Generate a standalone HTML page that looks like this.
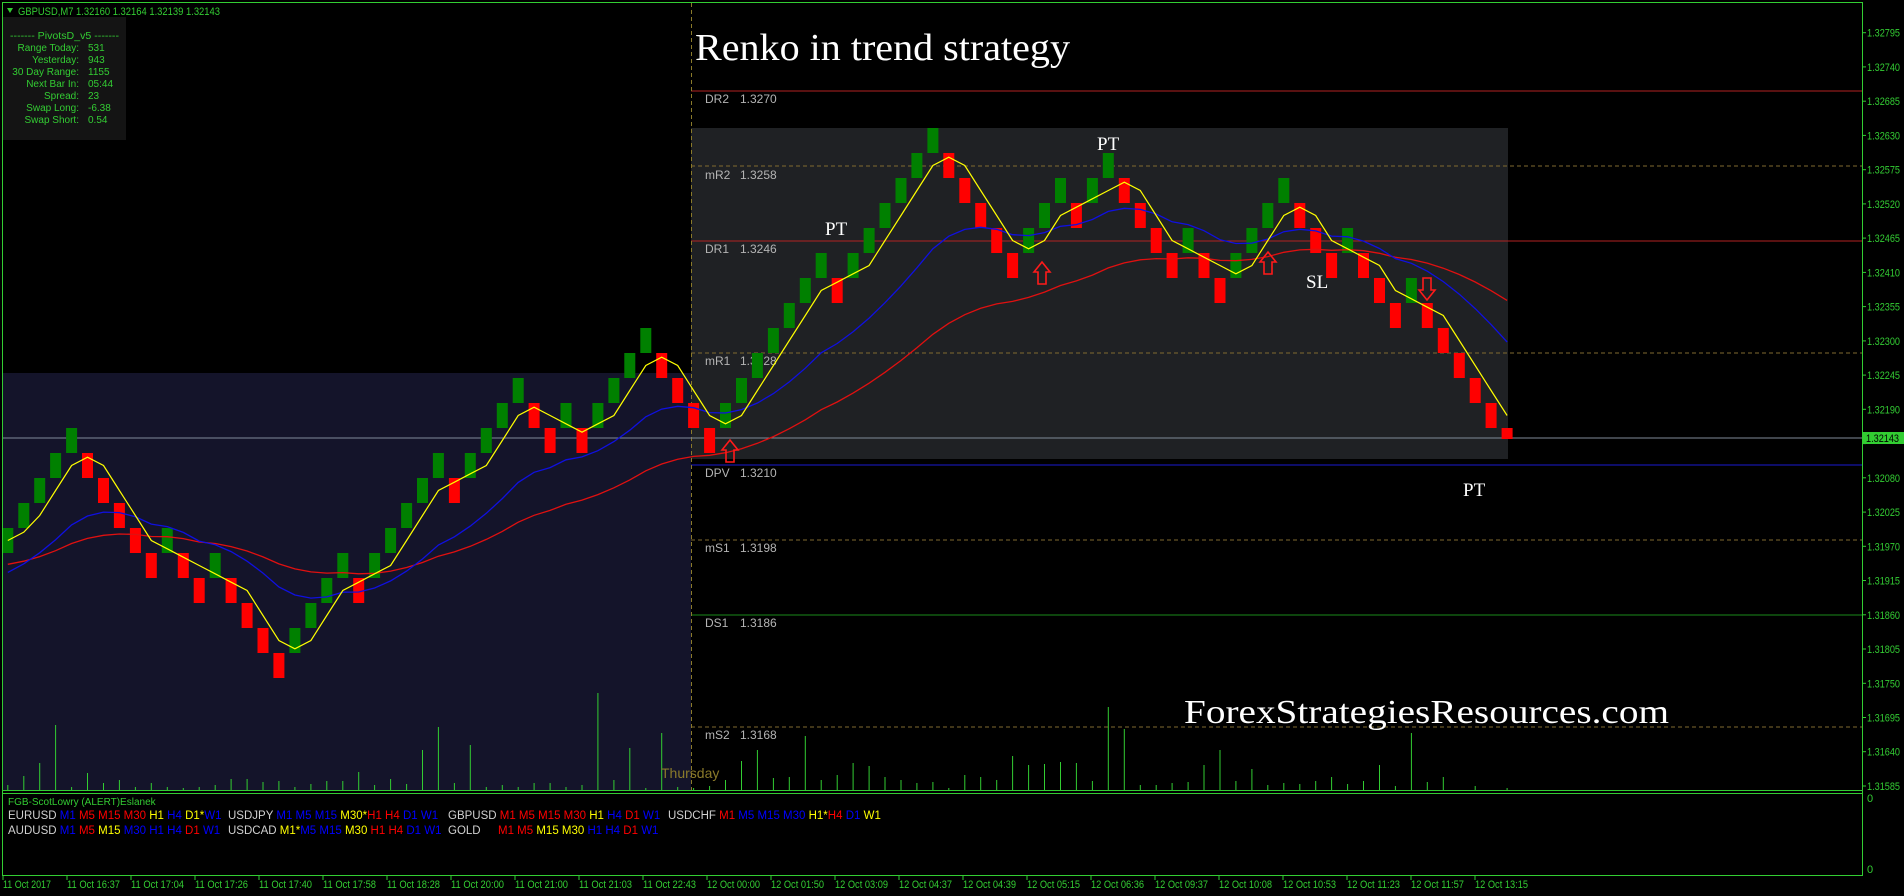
<!DOCTYPE html>
<html><head><meta charset="utf-8"><style>
html,body{margin:0;padding:0;background:#000;overflow:hidden}
svg{display:block}
text{font-family:"Liberation Sans",sans-serif}
.s{font-family:"Liberation Serif",serif;fill:#fff}
.g{fill:#3c3}
.w{fill:#d0d0d0}.b{fill:#0000ff}.r{fill:#ff0000}.y{fill:#ffff00}
</style></head><body>
<svg id="c" width="1904" height="896" viewBox="0 0 1904 896" xmlns="http://www.w3.org/2000/svg">
<rect width="1904" height="896" fill="#000"/>
<rect x="3" y="373" width="688" height="417" fill="#14142a"/>
<rect x="691" y="128" width="817" height="331" fill="#1f2124"/>
<g id="vol"></g>
<line x1="691" y1="91" x2="1862" y2="91" stroke="#b22222"/>
<line x1="691" y1="166" x2="1862" y2="166" stroke="#806a30" stroke-dasharray="4,3"/>
<line x1="691" y1="241" x2="1862" y2="241" stroke="#b22222"/>
<line x1="691" y1="353" x2="1862" y2="353" stroke="#806a30" stroke-dasharray="4,3"/>
<line x1="691" y1="465" x2="1862" y2="465" stroke="#1a1ad0"/>
<line x1="691" y1="540" x2="1862" y2="540" stroke="#806a30" stroke-dasharray="4,3"/>
<line x1="691" y1="615" x2="1862" y2="615" stroke="#1a8a1a"/>
<line x1="691" y1="727" x2="1862" y2="727" stroke="#806a30" stroke-dasharray="4,3"/>
<line x1="691.5" y1="3" x2="691.5" y2="790" stroke="#8a7a2a" stroke-dasharray="4,3"/>
<g font-size="12" fill="#b4b4b4">
<text x="705" y="103">DR2</text><text x="740" y="103">1.3270</text>
<text x="705" y="179">mR2</text><text x="740" y="179">1.3258</text>
<text x="705" y="253">DR1</text><text x="740" y="253">1.3246</text>
<text x="705" y="365">mR1</text><text x="740" y="365">1.3228</text>
<text x="705" y="477">DPV</text><text x="740" y="477">1.3210</text>
<text x="705" y="552">mS1</text><text x="740" y="552">1.3198</text>
<text x="705" y="627">DS1</text><text x="740" y="627">1.3186</text>
<text x="705" y="739">mS2</text><text x="740" y="739">1.3168</text>
</g>
<line x1="3" y1="438" x2="1862" y2="438" stroke="#7f8a99"/>
<g id="bricks"></g>
<polyline id="red" fill="none" stroke="#e01010" stroke-width="1.3"/>
<polyline id="blue" fill="none" stroke="#1010e0" stroke-width="1.3"/>
<polyline id="yel" fill="none" stroke="#ffff00" stroke-width="1.2"/>
<g fill="none" stroke="#ff1a1a" stroke-width="1.6">
<path d="M722 450 l8 -10 l8 10 h-4 v12 h-8 v-12 z"/>
<path d="M1034 272 l8 -10 l8 10 h-4 v12 h-8 v-12 z"/>
<path d="M1260 262 l8 -10 l8 10 h-4 v12 h-8 v-12 z"/>
<path d="M1419 290 l8 10 l8 -10 h-4 v-12 h-8 v12 z"/>
</g>
<text class="s" x="695" y="60" font-size="38" textLength="375" lengthAdjust="spacingAndGlyphs">Renko in trend strategy</text>
<text class="s" x="1184" y="723" font-size="34" textLength="485" lengthAdjust="spacingAndGlyphs">ForexStrategiesResources.com</text>
<text class="s" x="1097" y="150" font-size="19">PT</text>
<text class="s" x="825" y="235" font-size="19">PT</text>
<text class="s" x="1306" y="288" font-size="19">SL</text>
<text class="s" x="1463" y="496" font-size="19">PT</text>
<text x="661" y="778" font-size="14" fill="#8a7a2a">Thursday</text>
<rect x="3" y="17" width="123" height="123" fill="#141414"/>
<g font-size="10" class="g">
<text x="10" y="39" textLength="109" lengthAdjust="spacingAndGlyphs">------- PivotsD_v5 -------</text>
<g text-anchor="end">
<text x="79" y="51">Range  Today:</text><text x="79" y="63">Yesterday:</text><text x="79" y="75">30 Day Range:</text>
<text x="79" y="87">Next Bar In:</text><text x="79" y="99">Spread:</text><text x="79" y="111">Swap  Long:</text><text x="79" y="123">Swap  Short:</text>
</g>
<text x="88" y="51">531</text><text x="88" y="63">943</text><text x="88" y="75">1155</text><text x="88" y="87">05:44</text>
<text x="88" y="99">23</text><text x="88" y="111">-6.38</text><text x="88" y="123">0.54</text>
</g>
<path d="M7 8 h6 l-3 5 z" fill="#3c3"/>
<text x="18" y="15" font-size="11" class="g" textLength="202" lengthAdjust="spacingAndGlyphs">GBPUSD,M7  1.32160 1.32164 1.32139 1.32143</text>
<line x1="2" y1="2.5" x2="1862" y2="2.5" stroke="#32cd32"/>
<line x1="2.5" y1="2" x2="2.5" y2="875" stroke="#32cd32"/>
<line x1="1862.5" y1="2" x2="1862.5" y2="876" stroke="#32cd32"/>
<line x1="2" y1="790.5" x2="1862" y2="790.5" stroke="#32cd32"/>
<line x1="2" y1="793.5" x2="1862" y2="793.5" stroke="#32cd32"/>
<line x1="2" y1="875.5" x2="1862" y2="875.5" stroke="#32cd32"/>
<g id="axis" font-size="11" class="g"></g>
<rect x="1863" y="432" width="41" height="12" fill="#32cd32"/>
<text x="1866" y="442" font-size="11" fill="#000" textLength="33" lengthAdjust="spacingAndGlyphs">1.32143</text>
<text x="1867" y="802" font-size="11" class="g">0</text>
<text x="1867" y="873" font-size="11" class="g">0</text>
<text x="8" y="805" font-size="10" class="g">FGB-ScotLowry (ALERT)Eslanek</text>
<g font-size="11.5">
<text x="8" y="819"><tspan class="w">EURUSD </tspan><tspan class="b">M1 </tspan><tspan class="r">M5 M15 M30 </tspan><tspan class="y">H1 </tspan><tspan class="b">H4 </tspan><tspan class="y">D1*</tspan><tspan class="b">W1</tspan></text>
<text x="228" y="819"><tspan class="w">USDJPY </tspan><tspan class="b">M1 M5 M15 </tspan><tspan class="y">M30*</tspan><tspan class="r">H1 H4 </tspan><tspan class="b">D1 W1</tspan></text>
<text x="448" y="819"><tspan class="w">GBPUSD </tspan><tspan class="r">M1 M5 M15 M30 </tspan><tspan class="y">H1 </tspan><tspan class="b">H4 </tspan><tspan class="r">D1 </tspan><tspan class="b">W1</tspan></text>
<text x="668" y="819"><tspan class="w">USDCHF </tspan><tspan class="r">M1 </tspan><tspan class="b">M5 M15 M30 </tspan><tspan class="y">H1*</tspan><tspan class="r">H4 </tspan><tspan class="b">D1 </tspan><tspan class="y">W1</tspan></text>
<text x="8" y="834"><tspan class="w">AUDUSD </tspan><tspan class="b">M1 </tspan><tspan class="r">M5 </tspan><tspan class="y">M15 </tspan><tspan class="b">M30 H1 H4 </tspan><tspan class="r">D1 </tspan><tspan class="b">W1</tspan></text>
<text x="228" y="834"><tspan class="w">USDCAD </tspan><tspan class="y">M1*</tspan><tspan class="b">M5 M15 </tspan><tspan class="y">M30 </tspan><tspan class="r">H1 H4 </tspan><tspan class="b">D1 W1</tspan></text>
<text x="448" y="834"><tspan class="w">GOLD </tspan><tspan class="r" x="498">M1 M5 </tspan><tspan class="y">M15 M30 </tspan><tspan class="b">H1 H4 </tspan><tspan class="r">D1 </tspan><tspan class="b">W1</tspan></text>
</g>
<g font-size="11" class="g" id="times">
<text x="3" y="888">11 Oct 2017</text><text x="67" y="888">11 Oct 16:37</text><text x="131" y="888">11 Oct 17:04</text><text x="195" y="888">11 Oct 17:26</text>
<text x="259" y="888">11 Oct 17:40</text><text x="323" y="888">11 Oct 17:58</text><text x="387" y="888">11 Oct 18:28</text><text x="451" y="888">11 Oct 20:00</text>
<text x="515" y="888">11 Oct 21:00</text><text x="579" y="888">11 Oct 21:03</text><text x="643" y="888">11 Oct 22:43</text><text x="707" y="888">12 Oct 00:00</text>
<text x="771" y="888">12 Oct 01:50</text><text x="835" y="888">12 Oct 03:09</text><text x="899" y="888">12 Oct 04:37</text><text x="963" y="888">12 Oct 04:39</text>
<text x="1027" y="888">12 Oct 05:15</text><text x="1091" y="888">12 Oct 06:36</text><text x="1155" y="888">12 Oct 09:37</text><text x="1219" y="888">12 Oct 10:08</text>
<text x="1283" y="888">12 Oct 10:53</text><text x="1347" y="888">12 Oct 11:23</text><text x="1411" y="888">12 Oct 11:57</text><text x="1475" y="888">12 Oct 13:15</text>
</g>
<g id="ticks" stroke="#32cd32"></g>
</svg>
<script>
(function(){
var NS="http://www.w3.org/2000/svg";
function el(p,t,a){var e=document.createElementNS(NS,t);for(var k in a)e.setAttribute(k,a[k]);p.appendChild(e);return e;}
var L=[8,7,6,5,4,5,6,7,8,9,8,9,10,9,10,11,12,13,12,11,10,9,10,9,8,7,6,5,6,5,4,3,2,3,4,3,4,3,2,1,0,1,2,3,4,
3,2,1,0,-1,-2,-3,-2,-3,-4,-5,-6,-7,-8,-7,-6,-5,-4,-3,-4,-5,-6,-5,-6,-7,-6,-5,-4,-3,-4,-3,-2,-3,-4,-5,-6,-5,-4,-3,-4,-3,-2,-1,-2,-1,0,1,2,3,4];
var V=[5,14,27,65,3,17,7,10,3,7,3,2,3,5,11,11,8,9,3,6,9,9,18,5,11,6,40,63,7,45,3,5,3,7,7,3,5,97,10,42,2,57,3,2,4,10,29,40,12,13,54,10,15,27,24,13,10,7,8,2,15,13,10,
34,25,26,28,27,9,83,61,5,5,7,8,25,40,9,21,5,7,6,9,13,6,9,25,4,57,8,13,0,4,0,2];
var B=document.getElementById("bricks"),VG=document.getElementById("vol");
var mids=[],xs=[];
for(var i=0;i<L.length;i++){
 var x=2.3+15.95*i,y=328+25*L[i];
 var red=i>0&&L[i]>L[i-1];
 var h=(i==L.length-1)?11:25;
 el(B,"rect",{x:x.toFixed(1),y:y,width:11,height:h,fill:red?"#ff0000":"#008000"});
 mids.push(y+12.5);xs.push(x+5.5);
 if(V[i])el(VG,"line",{x1:(x+5.5).toFixed(1),x2:(x+5.5).toFixed(1),y1:790,y2:790-V[i],stroke:"#32cd32"});
}
var py=[],pb=[],pr=[],b=578,r=566;
for(var i=0;i<mids.length;i++){
 var a=mids[Math.max(0,i-2)],c=mids[Math.max(0,i-1)];
 py.push(xs[i].toFixed(1)+","+((a+c+mids[i])/3).toFixed(1));
 b=b+0.15*(mids[i]-b);r=r+0.065*(mids[i]-r);
 pb.push(xs[i].toFixed(1)+","+b.toFixed(1));pr.push(xs[i].toFixed(1)+","+r.toFixed(1));
}
document.getElementById("yel").setAttribute("points",py.join(" "));
document.getElementById("blue").setAttribute("points",pb.join(" "));
document.getElementById("red").setAttribute("points",pr.join(" "));
var A=document.getElementById("axis"),T=document.getElementById("ticks");
var v=132795;
for(var k=0;k<23;k++){
 var yy=32.7+34.24*k;
 el(T,"line",{x1:1862,x2:1866,y1:yy.toFixed(1),y2:yy.toFixed(1)});
 if(k!=12){var t=el(A,"text",{x:1867,y:(yy+4).toFixed(1),textLength:33,lengthAdjust:"spacingAndGlyphs"});t.textContent=(v/100000).toFixed(5);}
 v-=55;
}
for(var k=0;k<24;k++){var xx=3+64*k;el(T,"line",{x1:xx,x2:xx,y1:876,y2:880});}
var ts=document.getElementById("times").children;
for(var k=0;k<ts.length;k++){ts[k].setAttribute("textLength",k==0?48:53);ts[k].setAttribute("lengthAdjust","spacingAndGlyphs");}
})();
</script>
</body></html>
